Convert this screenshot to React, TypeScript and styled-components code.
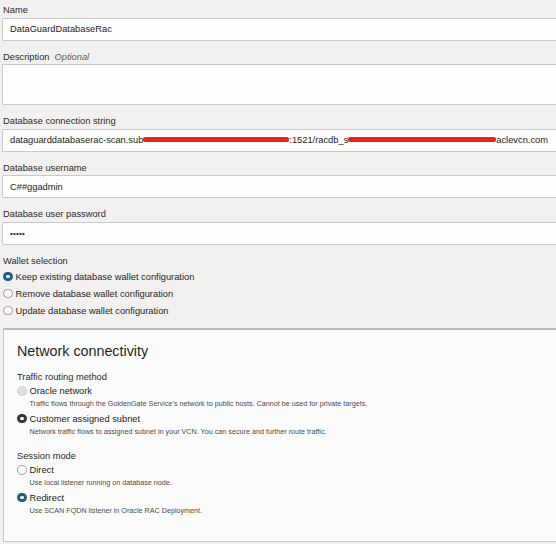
import styled, { createGlobalStyle, css } from "styled-components";

type RadioState = "on" | "off" | "dim" | "dark";

const GlobalStyle = createGlobalStyle`
  body {
    margin: 0;
    background: #f2f1f0;
    overflow: hidden;
  }
`;

function App() {
  return (
    <>
      <GlobalStyle />
      <Page>
        <Field>
          <Label>Name</Label>
          <InputBox>DataGuardDatabaseRac</InputBox>
        </Field>

        <Field>
          <Label>
            Description<Optional>Optional</Optional>
          </Label>
          <InputBox $tall />
        </Field>

        <Field>
          <Label>Database connection string</Label>
          <InputBox>
            dataguarddatabaserac-scan.sub
            <Redact $w={146} />
            :1521/racdb_s
            <Redact $w={148} />
            aclevcn.com
          </InputBox>
        </Field>

        <Field>
          <Label>Database username</Label>
          <InputBox>C##ggadmin</InputBox>
        </Field>

        <Field>
          <Label>Database user password</Label>
          <InputBox>
            <Dots>•••••</Dots>
          </InputBox>
        </Field>

        <Label>Wallet selection</Label>
        <WalletRow>
          <Radio $state="on" />
          Keep existing database wallet configuration
        </WalletRow>
        <WalletRow>
          <Radio $state="off" />
          Remove database wallet configuration
        </WalletRow>
        <WalletRow>
          <Radio $state="off" />
          Update database wallet configuration
        </WalletRow>

        <Panel>
          <Heading>Network connectivity</Heading>

          <Group>
            <GroupLabel>Traffic routing method</GroupLabel>
            <Option>
              <OptionRow>
                <Radio $state="dim" $big />
                Oracle network
              </OptionRow>
              <OptionDesc>
                Traffic flows through the GoldenGate Service's network to public
                hosts. Cannot be used for private targets.
              </OptionDesc>
            </Option>
            <Option>
              <OptionRow>
                <Radio $state="dark" $big />
                Customer assigned subnet
              </OptionRow>
              <OptionDesc>
                Network traffic flows to assigned subnet in your VCN. You can
                secure and further route traffic.
              </OptionDesc>
            </Option>
          </Group>

          <Group>
            <GroupLabel>Session mode</GroupLabel>
            <Option>
              <OptionRow>
                <Radio $state="off" $big />
                Direct
              </OptionRow>
              <OptionDesc>Use local listener running on database node.</OptionDesc>
            </Option>
            <Option>
              <OptionRow>
                <Radio $state="on" $big />
                Redirect
              </OptionRow>
              <OptionDesc>Use SCAN FQDN listener in Oracle RAC Deployment.</OptionDesc>
            </Option>
          </Group>
        </Panel>
      </Page>
    </>
  );
}

export default App;

const Page = styled.div`
  padding: 4px 0 0 2px;
  font-family: "Liberation Sans", Arial, sans-serif;
  font-size: 9.3px;
  color: #262626;
`;

const Field = styled.div`
  margin-bottom: 10px;
`;

const Label = styled.div`
  line-height: 12px;
  margin: 0 0 1.5px 1px;
  color: #2a2a2a;
`;

const Optional = styled.span`
  font-style: italic;
  color: #5e5e5e;
  margin-left: 5px;
`;

/* the fields run on past the right edge of the shot, so no right border */
const InputBox = styled.div<{ $tall?: boolean }>`
  display: flex;
  align-items: center;
  box-sizing: border-box;
  width: 100%;
  height: ${(p) => (p.$tall ? "41px" : "23px")};
  padding: 0 7px;
  border: 1px solid #c9c9c9;
  border-right: none;
  border-radius: 2px 0 0 2px;
  background: #fefefe;
  color: #232323;
  white-space: pre;
  overflow: hidden;
`;

const Redact = styled.span<{ $w: number }>`
  display: inline-block;
  flex: none;
  width: ${(p) => p.$w}px;
  height: 4.5px;
  margin-top: -1px;
  border-radius: 2px;
  background: #e8251c;
`;

const Dots = styled.span`
  letter-spacing: 0.2px;
  font-size: 8px;
`;

const WalletRow = styled.label`
  display: flex;
  align-items: center;
  gap: 3px;
  height: 17px;
  padding-left: 1px;
  color: #262626;
`;

const Radio = styled.span<{ $state: RadioState; $big?: boolean }>`
  flex: none;
  box-sizing: border-box;
  width: ${(p) => (p.$big ? "9.5px" : "9.5px")};
  height: ${(p) => (p.$big ? "9.5px" : "9.5px")};
  border-radius: 50%;
  border: 1px solid #9a9a9a;
  background: #fff;
  ${(p) =>
    p.$state === "dim" &&
    css`
      background: #dfdfdf;
      border-color: #cfcfcf;
    `}
  ${(p) =>
    (p.$state === "on" || p.$state === "dark") &&
    css`
      border: 3px solid ${p.$state === "on" ? "#1f5e80" : "#383838"};
      background: #fff;
    `}
`;

const Panel = styled.section`
  margin: 9px 0 0 1px;
  padding: 11px 0 23px 13px;
  border: 1px solid #cacaca;
  border-top: 2px solid #b8b8b8;
  border-right: none;
  background: #fcfcfc;
`;

const Heading = styled.h2`
  margin: 0 0 10px;
  font-size: 14.3px;
  font-weight: 400;
  line-height: 20px;
  color: #1e1e1e;
`;

const Group = styled.div`
  margin-bottom: 13.5px;
  &:last-child {
    margin-bottom: 0;
  }
`;

const GroupLabel = styled.div`
  line-height: 12px;
  margin-bottom: 1px;
  color: #2a2a2a;
`;

const Option = styled.div`
  margin-bottom: 2.5px;
`;

const OptionRow = styled.label`
  display: flex;
  align-items: center;
  gap: 3px;
  line-height: 14px;
  color: #232323;
`;

const OptionDesc = styled.div`
  padding-left: 12.5px;
  font-size: 7.2px;
  line-height: 11px;
  color: #4a4a4a;
`;
